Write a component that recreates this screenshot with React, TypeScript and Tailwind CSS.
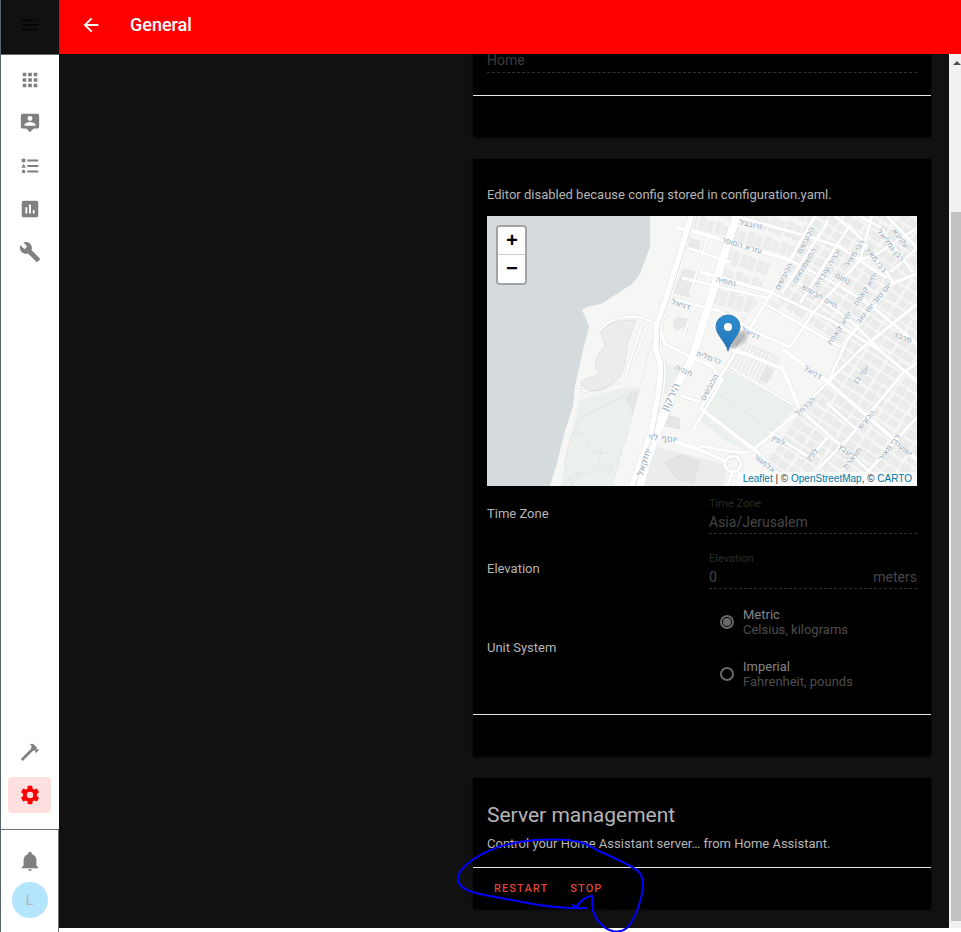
import type { ReactNode } from "react";
import { MdApps, MdArrowBack, MdAssessment, MdBuild, MdMenu } from "react-icons/md";

const icons = {
  account:
    "M20,2H4A2,2 0 0,0 2,4V16A2,2 0 0,0 4,18H8L12,22L16,18H20A2,2 0 0,0 22,16V4A2,2 0 0,0 20,2M12,4.3A2.7,2.7 0 0,1 14.7,7A2.7,2.7 0 0,1 12,9.7A2.7,2.7 0 0,1 9.3,7A2.7,2.7 0 0,1 12,4.3M18,15H6V14.1C6,12.1 10,11 12,11C14,11 18,12.1 18,14.1V15Z",
  list: "M5,9.5L7.5,14H2.5L5,9.5M3,4H7V8H3V4M5,20A2,2 0 0,0 7,18A2,2 0 0,0 5,16A2,2 0 0,0 3,18A2,2 0 0,0 5,20M9,5V7H21V5H9M9,19H21V17H9V19M9,13H21V11H9V13Z",
  hammer:
    "M2,19.63L13.43,8.2L12.72,7.5L14.14,6.07L12,3.89C13.2,2.7 15.09,2.7 16.27,3.89L19.87,7.5L18.45,8.91H21.29L22,9.62L18.45,13.21L17.74,12.5V9.62L16.27,11.04L15.56,10.33L4.13,21.76L2,19.63Z",
  cog: "M12,15.5A3.5,3.5 0 0,1 8.5,12A3.5,3.5 0 0,1 12,8.5A3.5,3.5 0 0,1 15.5,12A3.5,3.5 0 0,1 12,15.5M19.43,12.97C19.47,12.65 19.5,12.33 19.5,12C19.5,11.67 19.47,11.34 19.43,11L21.54,9.37C21.73,9.22 21.78,8.95 21.66,8.73L19.66,5.27C19.54,5.05 19.27,4.96 19.05,5.05L16.56,6.05C16.04,5.66 15.5,5.32 14.87,5.07L14.5,2.42C14.46,2.18 14.25,2 14,2H10C9.75,2 9.54,2.18 9.5,2.42L9.13,5.07C8.5,5.32 7.96,5.66 7.44,6.05L4.95,5.05C4.73,4.96 4.46,5.05 4.34,5.27L2.34,8.73C2.21,8.95 2.27,9.22 2.46,9.37L4.57,11C4.53,11.34 4.5,11.67 4.5,12C4.5,12.33 4.53,12.65 4.57,12.97L2.46,14.63C2.27,14.78 2.21,15.05 2.34,15.27L4.34,18.73C4.46,18.95 4.73,19.03 4.95,18.95L7.44,17.94C7.96,18.34 8.5,18.68 9.13,18.93L9.5,21.58C9.54,21.82 9.75,22 10,22H14C14.25,22 14.46,21.82 14.5,21.58L14.87,18.93C15.5,18.67 16.04,18.34 16.56,17.94L19.05,18.95C19.27,19.03 19.54,18.95 19.66,18.73L21.66,15.27C21.78,15.05 21.73,14.78 21.54,14.63L19.43,12.97Z",
  bell: "M21,19V20H3V19L5,17V11C5,7.9 7.03,5.17 10,4.29C10,4.19 10,4.1 10,4A2,2 0 0,1 12,2A2,2 0 0,1 14,4C14,4.1 14,4.19 14,4.29C16.97,5.17 19,7.9 19,11V17L21,19M14,21A2,2 0 0,1 12,23A2,2 0 0,1 10,21",
};

function Icon({ path }: { path: string }) {
  return (
    <svg viewBox="0 0 24 24" className="size-[22px]" fill="currentColor" aria-hidden="true">
      <path d={path} />
    </svg>
  );
}

function NavItem({ label, active, children }: { label: string; active?: boolean; children: ReactNode }) {
  return (
    <a
      href="#"
      aria-label={label}
      className={
        active
          ? "flex h-9 w-[43px] items-center justify-center rounded bg-[#ffe0e0] text-[#ff0000]"
          : "flex h-9 w-[43px] items-center justify-center rounded text-[#808080]"
      }
    >
      {children}
    </a>
  );
}

function Sidebar() {
  return (
    <aside className="flex w-[59px] shrink-0 flex-col border-l border-[#5a646e] bg-white">
      <div className="flex h-[55px] shrink-0 items-center justify-center border-b border-[#6b6b6b] bg-[#111111] pb-1">
        <button aria-label="Menu" className="text-[#060606]">
          <MdMenu className="size-[22px]" />
        </button>
      </div>
      <nav className="flex flex-1 flex-col items-start gap-[7px] pt-[7px] pb-4 pl-[7px]">
        <NavItem label="Overview"><MdApps className="size-[22px]" /></NavItem>
        <NavItem label="Map"><Icon path={icons.account} /></NavItem>
        <NavItem label="Logbook"><Icon path={icons.list} /></NavItem>
        <NavItem label="History"><MdAssessment className="size-[22px]" /></NavItem>
        <NavItem label="Tools"><MdBuild className="size-[22px]" /></NavItem>
        <div className="flex-1" />
        <NavItem label="Developer tools"><Icon path={icons.hammer} /></NavItem>
        <NavItem label="Configuration" active><Icon path={icons.cog} /></NavItem>
      </nav>
      <div className="flex flex-col items-center border-t border-r border-[#707070] pt-[13px] pb-[14px]">
        <NavItem label="Notifications"><Icon path={icons.bell} /></NavItem>
        <a
          href="#"
          className="mt-[3px] flex size-9 items-center justify-center rounded-full bg-[#b3e5fc] text-sm text-[#b4b4b4]"
        >
          L
        </a>
      </div>
    </aside>
  );
}

const minorStreets = [
  "M251 1L323 21L353 31L390 56L400 62",
  "M303 44L356 72L386 91L430 128",
  "M283 76L343 104L392 134L430 165",
  "M280 89L353 131",
  "M301 59L366 107L393 134",
  "M328 0L285 76L256 124L213 194",
  "M341 4L338 10L295 77",
  "M363 9L350 29L313 87",
  "M385 0L373 44L326 97L303 131",
  "M430 12L390 38L373 44",
  "M430 32L404 56",
  "M406 67L360 124L341 166",
  "M348 0L372 20L400 57L406 67L430 58",
  "M372 0L393 11L426 57",
  "M400 0L430 32",
  "M310 197L341 166L373 134L430 88",
  "M430 147L416 157L360 224L330 254",
  "M430 201L380 257L372 270",
  "M340 187L368 212",
  "M283 216L323 242L341 221",
  "M266 234L310 197",
  "M313 194L360 235L396 268",
  "M232 162L225 150L206 142L178 128L172 109",
  "M201 32L243 46",
  "M195 62L280 82",
  "M188 84L232 95L270 117L303 131",
  "M195 180L213 186M206 214L226 180L236 162",
];

const lanes = [
  "M112 115C125 99 150 96 171 109",
  "M155 108L139 158L142 166M160 110L145 150",
  "M215 80L205 96L196 120M221 20L203 78",
  "M306 189L243 151",
];

const mainStreets = [
  "M213 17L303 44M189 12L213 17",
  "M213 56L283 76",
  "M296 134L341 166L410 226L430 244",
  "M213 192L270 236L298 266",
  "M236 131L262 139L296 153L313 194",
  "M163 217L213 234L238 245",
];

const highways = [
  "M206 -2L180 84L171 109L170 134C178 148 175 170 165 217L145 272",
  "M250 -2L220 94L213 117L206 141L184 180C176 205 169 218 164 232L152 272",
];

// x, y, angle, name, font size
const labels: [number, number, number, string, number?][] = [
  [264, 8, 12, "זרובבל"],
  [255, 29, 17, "עזרא הסופר"],
  [239, 65, 14, "נחמיה"],
  [194, 88, 18, "דניאל"],
  [264, 117, 27, "דניאל"],
  [318, 24, -63, "הכובשים"],
  [296, 60, -63, "הכובשים"],
  [317, 49, -59, "החשמונאים"],
  [340, 52, -58, "זכריה עובדיה"],
  [367, 37, -57, "רבי מאיר"],
  [389, 43, 53, "רבי מאיר"],
  [404, 29, 52, "רבן גמליאל"],
  [414, 22, 54, "עקיבא"],
  [333, 80, 31, "חיים חבשוש"],
  [356, 62, 28, "נחום"],
  [378, 73, -57, "יחיא קאפח"],
  [352, 112, -57, "יחיא קאפח"],
  [386, 87, -50, "יום טוב יום טוב"],
  [416, 121, 20, "מרבד"],
  [222, 141, 20, "כרמלית"],
  [197, 154, 25, "חנניה"],
  [222, 171, -61, "הכובשים"],
  [184, 181, -64, "הירקון", 11],
  [176, 222, 6, "יוסף לוי", 9],
  [157, 246, -72, "יחזקאל", 9],
  [326, 156, 31, "דניאל"],
  [318, 190, -43, "הכרמל"],
  [374, 158, -50, "יוסי בן"],
  [379, 203, -50, "הכובש"],
  [402, 231, -53, "רבי מאיר"],
  [292, 224, 30, "לפין"],
  [325, 238, -47, "לפין"],
  [359, 234, 38, "יעבץ"],
  [278, 247, 39, "אלמגור"],
  [417, 232, 40, "ישועה"],
  [365, 242, -52, "תפארת"],
];

function MapTiles() {
  return (
    <svg viewBox="0 0 430 270" preserveAspectRatio="xMidYMid slice" className="h-full w-full" aria-hidden="true">
      <defs>
        <pattern id="blocks" width="23" height="21" patternUnits="userSpaceOnUse" patternTransform="rotate(33)">
          <path d="M1 1h9v8h-9zM12 2h9v7h-9zM2 12h7v7h-7zM11 12h10v7h-10z" fill="#eaebeb" stroke="#e2e3e3" strokeWidth=".5" />
        </pattern>
        <pattern id="blocksWest" width="17" height="21" patternUnits="userSpaceOnUse" patternTransform="rotate(17)">
          <path d="M1 1h6v15h-6zM9 3h6v14h-6z" fill="#ebecec" stroke="#e3e4e4" strokeWidth=".5" />
        </pattern>
        <pattern id="parking" width="4" height="4" patternUnits="userSpaceOnUse" patternTransform="rotate(25)">
          <path d="M1 0V4" stroke="#e0e0e0" />
        </pattern>
        <linearGradient id="pin" x1="0" y1="0" x2="0" y2="1">
          <stop offset="0" stopColor="#2e8fd0" />
          <stop offset="1" stopColor="#2473b8" />
        </linearGradient>
        <filter id="soft">
          <feGaussianBlur stdDeviation="1.8" />
        </filter>
      </defs>
      <rect width="430" height="270" fill="#f6f6f5" />
      <path d="M0 0H163V31L153 58L145 68L114 88L100 91L95 94L102 110L96 134L88 170L86 190L77 218L70 247L63 270H0Z" fill="#d5dadd" />
      <path d="M93 184L130 173L150 170L146 197L125 270H74L81 230Z" fill="#ebf0ed" />
      <path d="M138 182L152 173L146 198Z" fill="#e4e5e5" />
      <path d="M177 145L193 154L178 180Z" fill="#ebf0ed" />
      <path d="M236 152L310 189L270 236L213 194Z" fill="#eaf0ec" />
      <path d="M213 196L264 236L240 226L213 204Z" fill="#eaf0ec" />

      {/* buildings */}
      <path d="M322 0H430V270H300L278 246L310 200L341 168L354 128L303 98L286 76Z" fill="url(#blocks)" />
      <path d="M250 0H325L303 40L246 24Z" fill="url(#blocksWest)" />
      <path d="M207 0H246L238 20L204 12ZM240 32L284 48L274 72L232 58Z" fill="url(#blocksWest)" />
      <path d="M228 68L272 84L258 104L225 94Z" fill="url(#blocksWest)" />
      <path d="M285 84L294 89L289 97L280 92Z" fill="#eaf0ec" />
      <path
        d="M114 116C120 106 134 104 149 104L140 128C138 150 138 162 115 174C104 176 96 174 95 166C100 160 110 162 112 156C104 146 112 138 118 130Z"
        fill="#ebecec"
        stroke="#e0e1e1"
      />
      <path d="M197 53L210 57L203 81L187 77ZM202 22L213 26L211 34L200 30ZM190 101L202 104L200 115L194 111L190 114L186 110Z" fill="#e8e9e9" stroke="#dedede" strokeWidth=".6" />
      <path d="M170 231L232 247L240 252L236 270H154Z" fill="#ebecec" />
      <path d="M178 247L194 239L212 246L207 267L190 263Z" fill="#e3e5e5" stroke="#dadcdc" strokeWidth=".7" />
      <path d="M180 199L192 202L193 213L177 210Z" fill="#e5e6e6" stroke="#dadada" strokeWidth=".5" />
      <path d="M252 124L293 142L275 168L238 151Z" fill="url(#parking)" stroke="#e0e0e0" strokeWidth=".7" />
      <path d="M279 150L288 154L280 168L272 163Z" fill="#e5e6e6" />

      {/* footpaths */}
      <g fill="none" stroke="#cfd2d2" strokeDasharray="1 2">
        <path d="M203 0L164 128L148 190L125 270" />
        <path d="M86 270L77 250L84 222L94 202L150 174" />
        <path d="M87 218C104 214 98 236 110 237C122 234 126 240 130 242M114 237C112 256 98 262 88 256M76 268L94 255L85 270M113 252L126 248L120 262" />
        <path d="M223 172L292 219" />
        <path d="M94 166V178L134 167" />
      </g>

      {/* streets, casing first */}
      <g fill="none" stroke="#e2e4e4" strokeLinejoin="round">
        {lanes.map((d) => <path key={d} d={d} strokeWidth="3" />)}
        {minorStreets.map((d) => <path key={d} d={d} strokeWidth="4" />)}
        {mainStreets.map((d) => <path key={d} d={d} strokeWidth="5" />)}
        {highways.map((d) => <path key={d} d={d} strokeWidth="9" />)}
        <circle cx="246" cy="248" r="8" strokeWidth="5" />
        <path d="M213 230C230 232 245 238 262 236M246 256L240 270" strokeWidth="4" />
      </g>
      <g fill="none" stroke="#ffffff" strokeLinejoin="round">
        {lanes.map((d) => <path key={d} d={d} strokeWidth="2" />)}
        {minorStreets.map((d) => <path key={d} d={d} strokeWidth="3" />)}
        {mainStreets.map((d) => <path key={d} d={d} strokeWidth="4" />)}
        {highways.map((d) => <path key={d} d={d} strokeWidth="8" />)}
        <circle cx="246" cy="248" r="8" strokeWidth="3" />
        <path d="M213 230C230 232 245 238 262 236M246 256L240 270" strokeWidth="3" />
      </g>
      <path d="M208 0L182 84L173 109L172 134C180 148 177 170 167 217L148 270" fill="none" stroke="#dcdede" />

      <g fill="#95a9bb" stroke="#f8f8f8" strokeWidth="1" paintOrder="stroke" textAnchor="middle">
        {labels.map(([x, y, angle, name, size], i) => (
          <text
            key={i}
            x={x}
            y={y}
            dy="3"
            transform={`rotate(${angle} ${x} ${y})`}
            fontSize={size ?? 8}
            fontFamily="'DejaVu Sans', sans-serif"
          >
            {name}
          </text>
        ))}
      </g>

      <path d="M241 134L247 120Q255 112 260 118Q261 124 252 130Z" fill="#000000" opacity=".25" filter="url(#soft)" />
      <path d="M241 135C239 126 229 119 229 110.5A12 11.5 0 0 1 253 110.5C253 119 243 126 241 135Z" fill="url(#pin)" stroke="#2a6fa8" strokeWidth=".8" />
      <circle cx="241" cy="111" r="4" fill="#ffffff" />
    </svg>
  );
}

function LocationMap() {
  return (
    <div className="relative mt-[11px] h-[270px] overflow-hidden bg-[#f6f6f5]">
      <MapTiles />
      <div className="absolute top-[9px] left-[9px] flex flex-col rounded border-2 border-black/25 font-['Liberation_Mono',monospace] text-xl font-bold text-black">
        <button aria-label="Zoom in" className="flex h-7 w-[27px] items-center justify-center rounded-t-xs border-b border-[#cccccc] bg-white pt-[2px] pl-px">
          +
        </button>
        <button aria-label="Zoom out" className="flex h-7 w-[27px] items-center justify-center rounded-b-xs bg-white pt-[2px] pl-px">
          −
        </button>
      </div>
      <div className="absolute right-0 bottom-0 bg-white/70 px-[5px] font-['Liberation_Sans',Arial,sans-serif] text-[10px] leading-[14px] text-[#333333]">
        <a href="#" className="text-[#0078a8]">Leaflet</a> | © <a href="#" className="text-[#0078a8]">OpenStreetMap</a>, ©{" "}
        <a href="#" className="text-[#0078a8]">CARTO</a>
      </div>
    </div>
  );
}

function Card({ children, footer }: { children: ReactNode; footer?: ReactNode }) {
  return (
    <section className="relative rounded-xs bg-black shadow-sm shadow-black/60">
      <div className="px-[14px]">{children}</div>
      <div className="flex h-[42px] items-center gap-2 border-t border-[#e8e8e8] px-[14px] pt-px">{footer}</div>
    </section>
  );
}

function Field({ id, label, value, suffix }: { id: string; label: string; value: string; suffix?: string }) {
  return (
    <div className="flex h-[55px] items-center justify-between">
      <span>{label}</span>
      <div className="flex h-full w-[208px] flex-col pt-[11px]">
        <label htmlFor={id} className="text-[11px] leading-[14px] text-[#2b2b2b]">{label}</label>
        <div className="flex h-[23px] items-center border-b border-dashed border-[#303030] pb-px text-sm text-[#464646]">
          <input id={id} disabled defaultValue={value} className="w-full min-w-0 flex-1 bg-transparent" />
          {suffix && <span>{suffix}</span>}
        </div>
      </div>
    </div>
  );
}

function UnitOption({ name, detail, checked }: { name: string; detail: string; checked?: boolean }) {
  return (
    <label className="flex h-[52px] items-center gap-[9px] pl-[11px]">
      <input
        type="radio"
        name="unit"
        disabled
        defaultChecked={checked}
        className="size-[14px] appearance-none rounded-full border-2 border-[#6a6a6a] bg-clip-content p-px checked:bg-[#6a6a6a]"
      />
      <span className="flex flex-col leading-[15px]">
        <span className="text-[#858585]">{name}</span>
        <span className="text-[#4d4d4d]">{detail}</span>
      </span>
    </label>
  );
}

function Ink() {
  return (
    <svg
      viewBox="0 0 190 96"
      className="pointer-events-none absolute -bottom-6 -left-4 z-10 h-24 w-[190px] overflow-visible"
      fill="none"
      stroke="#0000ff"
      strokeWidth="2"
      strokeLinecap="round"
      aria-hidden="true"
    >
      <path d="M130 71C105 72 85 69 65 65C45 61 30 59 19 56C7 53 1 48 1 42C1 34 8 28 17 22C32 12 53 5 78 3C98 2 116 2 126 6C133 8 137 12 144 15C157 21 172 27 181 34C187 40 187 50 184 61C181 73 177 83 170 91C162 97 152 95 145 88C138 82 135 75 135 66C135 61 136 58 134 59C128 60 122 65 119 71M116 68L119 71L122 71" />
    </svg>
  );
}

export default function App() {
  return (
    <div className="flex h-screen overflow-hidden bg-white font-[Roboto,sans-serif] text-[13px] text-[#b5b5b5]">
      <Sidebar />
      <div className="flex min-w-0 flex-1 flex-col">
        <header className="relative z-10 flex h-[54px] shrink-0 items-center bg-[#ff0000] px-[21px] pb-1 text-white">
          <button aria-label="Back" className="flex size-[22px] items-center justify-center">
            <MdArrowBack className="size-[22px]" />
          </button>
          <h1 className="ml-7 text-lg font-medium">General</h1>
        </header>
        <div className="mb-1 flex min-h-0 flex-1">
          <main className="min-w-0 flex-1 bg-[#111111] pr-[18px]">
            <div className="-mt-[5px] ml-auto flex max-w-[458px] flex-col gap-[22px]">
              <Card>
                <div className="pb-[22px]">
                  <input
                    aria-label="Name"
                    disabled
                    defaultValue="Home"
                    className="block h-6 w-full border-b border-dashed border-[#303030] bg-transparent pb-[2px] text-sm text-[#3c3c3c]"
                  />
                </div>
              </Card>

              <Card>
                <div className="pt-[26px] pb-[14px]">
                  <p className="leading-5">Editor disabled because config stored in configuration.yaml.</p>
                  <LocationMap />
                  <Field id="time-zone" label="Time Zone" value="Asia/Jerusalem" />
                  <Field id="elevation" label="Elevation" value="0" suffix="meters" />
                  <div className="flex items-center justify-between">
                    <span>Unit System</span>
                    <div role="radiogroup" aria-label="Unit System" className="w-[208px]">
                      <UnitOption name="Metric" detail="Celsius, kilograms" checked />
                      <UnitOption name="Imperial" detail="Fahrenheit, pounds" />
                    </div>
                  </div>
                </div>
              </Card>

              <div className="relative">
                <Card
                  footer={
                    <>
                      <button className="px-[7px] py-2 text-[11px] font-medium tracking-widest text-[#db4437]">RESTART</button>
                      <button className="px-[7px] py-2 text-[11px] font-medium tracking-widest text-[#db4437]">STOP</button>
                    </>
                  }
                >
                  <div className="pt-[22px] pb-[13px]">
                    <h2 className="text-[21px] leading-[30px]">Server management</h2>
                    <p className="mt-1 leading-5">Control your Home Assistant server… from Home Assistant.</p>
                  </div>
                </Card>
                <Ink />
              </div>
            </div>
          </main>
          <div className="flex w-3 shrink-0 flex-col items-end bg-[#f1f1f1] pt-[7px] pb-[7px]" aria-hidden="true">
            <svg viewBox="0 0 8 4" className="h-1 w-2 shrink-0" fill="#505050">
              <path d="M0 4L4 0L8 4Z" />
            </svg>
            <div className="mt-[147px] w-[10px] flex-1 bg-[#c1c1c1]" />
          </div>
        </div>
      </div>
    </div>
  );
}
